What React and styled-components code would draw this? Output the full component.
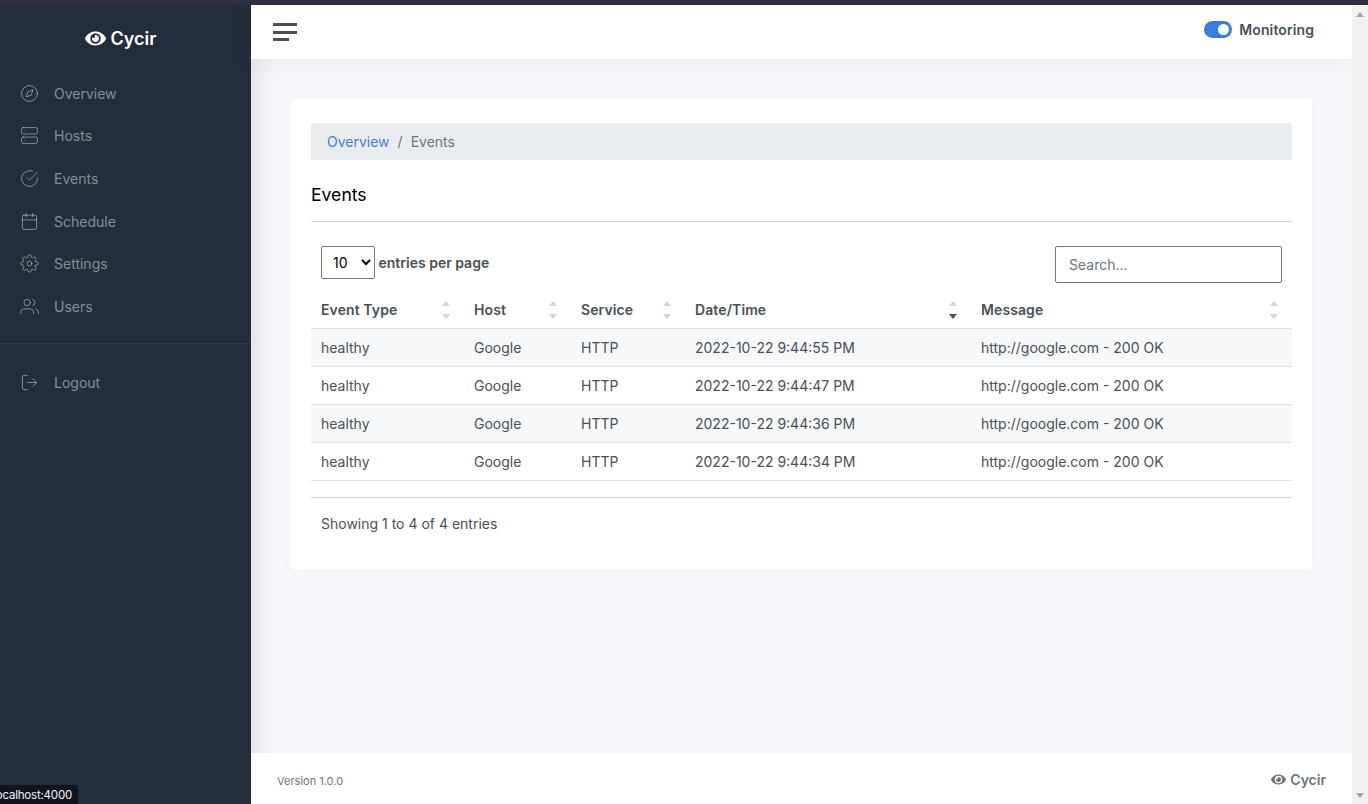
import React from "react";
import styled, { createGlobalStyle } from "styled-components";
import { FiCompass, FiServer, FiCheckCircle, FiCalendar, FiSettings, FiUsers, FiLogOut } from "react-icons/fi";
import { FaEye } from "react-icons/fa";

const navItems = [
  { label: "Overview", icon: FiCompass },
  { label: "Hosts", icon: FiServer },
  { label: "Events", icon: FiCheckCircle },
  { label: "Schedule", icon: FiCalendar },
  { label: "Settings", icon: FiSettings },
  { label: "Users", icon: FiUsers },
];

const columns = [
  { label: "Event Type", width: 153 },
  { label: "Host", width: 107 },
  { label: "Service", width: 114 },
  { label: "Date/Time", width: 286, sorted: true },
  { label: "Message" },
];

const rows = [
  ["healthy", "Google", "HTTP", "2022-10-22 9:44:55 PM", "http://google.com - 200 OK"],
  ["healthy", "Google", "HTTP", "2022-10-22 9:44:47 PM", "http://google.com - 200 OK"],
  ["healthy", "Google", "HTTP", "2022-10-22 9:44:36 PM", "http://google.com - 200 OK"],
  ["healthy", "Google", "HTTP", "2022-10-22 9:44:34 PM", "http://google.com - 200 OK"],
];

const App = () => {
  return (
    <>
      <GlobalStyle />
      <Page>
        <TopStrip />
        <Body>
          <Sidebar>
            <Brand>
              <FaEye size={21} />
              Cycir
            </Brand>
            <NavList>
              {navItems.map(({ label, icon: Icon }) => (
                <NavItem key={label}>
                  <Icon size={19} strokeWidth={1.2} />
                  {label}
                </NavItem>
              ))}
            </NavList>
            <NavDivider />
            <NavItem>
              <FiLogOut size={19} strokeWidth={1.2} />
              Logout
            </NavItem>
          </Sidebar>

          <Main>
            <Header>
              <MenuButton>
                <MenuBar />
                <MenuBar />
                <MenuBar $short />
              </MenuButton>
              <MonitorToggle>
                <Switch />
                Monitoring
              </MonitorToggle>
            </Header>

            <Content>
              <Card>
                <Breadcrumb>
                  <CrumbLink>Overview</CrumbLink>
                  <CrumbSep>/</CrumbSep>
                  <span>Events</span>
                </Breadcrumb>
                <PageTitle>Events</PageTitle>
                <TableTop>
                  <PerPage>
                    <PerPageSelect defaultValue="10">
                      <option>5</option>
                      <option>10</option>
                      <option>15</option>
                    </PerPageSelect>
                    entries per page
                  </PerPage>
                  <SearchInput placeholder="Search..." />
                </TableTop>
                <Table>
                  <thead>
                    <tr>
                      {columns.map((col) => (
                        <HeadCell key={col.label} style={{ width: col.width }}>
                          <HeadInner>
                            {col.label}
                            <SortArrows>
                              <ArrowUp />
                              <ArrowDown $active={col.sorted} />
                            </SortArrows>
                          </HeadInner>
                        </HeadCell>
                      ))}
                    </tr>
                  </thead>
                  <tbody>
                    {rows.map((row, i) => (
                      <Row key={i} $odd={i % 2 === 0}>
                        {row.map((cell, j) => (
                          <Cell key={j}>{cell}</Cell>
                        ))}
                      </Row>
                    ))}
                  </tbody>
                </Table>
                <TableBottom>Showing 1 to 4 of 4 entries</TableBottom>
              </Card>
            </Content>

            <Footer>
              <Version>Version 1.0.0</Version>
              <FooterBrand>
                <FaEye size={15} />
                Cycir
              </FooterBrand>
            </Footer>
          </Main>

          <Scrollbar>
            <ScrollUp />
            <ScrollDown />
          </Scrollbar>
        </Body>
        <StatusTip>localhost:4000</StatusTip>
      </Page>
    </>
  );
};

export default App;

const GlobalStyle = createGlobalStyle`
  html, body {
    margin: 0;
    padding: 0;
    height: 100%;
    overflow: hidden;
  }
  body {
    font-family: Inter, "Liberation Sans", sans-serif;
    font-size: 14px;
    color: #495057;
  }
  * {
    box-sizing: border-box;
  }
`;

const Page = styled.div`
  position: relative;
  display: flex;
  flex-direction: column;
  height: 100vh;
`;

const TopStrip = styled.div`
  flex: 0 0 5px;
  background: #2f3142;
`;

const Body = styled.div`
  flex: 1;
  display: flex;
  min-height: 0;
`;

const Sidebar = styled.nav`
  flex: 0 0 251px;
  background: #222e3c;
`;

const Brand = styled.div`
  display: flex;
  align-items: center;
  justify-content: center;
  gap: 5px;
  height: 66.7px;
  padding-right: 10px;
  color: #fff;
  font-size: 18px;
  font-weight: 600;
`;

const NavList = styled.div`
  display: flex;
  flex-direction: column;
`;

const NavItem = styled.a`
  display: flex;
  align-items: center;
  gap: 15px;
  height: 42.7px;
  padding-left: 20px;
  color: rgba(233, 236, 239, 0.5);
  font-size: 14px;

  svg {
    flex: none;
  }
`;

const NavDivider = styled.div`
  height: 1px;
  margin: 15px 0 17px;
  background: #2d3a49;
`;

const Main = styled.div`
  flex: 1;
  display: flex;
  flex-direction: column;
  min-width: 0;
  background: #f7f7fc;
  box-shadow: inset 28px 0 22px -20px rgba(34, 46, 60, 0.1);
`;

const Header = styled.header`
  flex: 0 0 54px;
  display: flex;
  align-items: center;
  justify-content: space-between;
  padding: 0 38px 0 22px;
  background: #fff;
  box-shadow: 0 0 28px rgba(34, 46, 60, 0.08);
`;

const MenuButton = styled.div`
  display: flex;
  flex-direction: column;
  gap: 4.5px;
  width: 24px;
`;

const MenuBar = styled.span`
  display: block;
  height: 3px;
  width: ${(p) => (p.$short ? "16px" : "24px")};
  background: #495057;
`;

const MonitorToggle = styled.div`
  display: flex;
  align-items: center;
  gap: 7px;
  padding-bottom: 5px;
  font-size: 14px;
  font-weight: 600;
  letter-spacing: 0.1px;
`;

const Switch = styled.span`
  position: relative;
  display: block;
  width: 28px;
  height: 17px;
  border-radius: 9px;
  background: #3b7ddd;

  &::after {
    content: "";
    position: absolute;
    top: 3px;
    right: 3px;
    width: 11px;
    height: 11px;
    border-radius: 50%;
    background: #fff;
  }
`;

const Content = styled.main`
  flex: 1;
  padding: 40px 40px 0;
`;

const Card = styled.section`
  height: 471px;
  padding: 24px 20px;
  background: #fff;
  border-radius: 4px;
  box-shadow: 0 0 14px rgba(34, 46, 60, 0.03);
`;

const Breadcrumb = styled.div`
  display: flex;
  align-items: center;
  gap: 8px;
  height: 37px;
  padding: 0 16px;
  border-radius: 3px;
  background: #e9ecef;
  color: #6c757d;
`;

const CrumbLink = styled.a`
  color: #4a7fd8;
`;

const CrumbSep = styled.span`
  color: #6c757d;
`;

const PageTitle = styled.h2`
  margin: 0 0 24px;
  padding: 24px 0 16px;
  border-bottom: 1px solid #ced4da;
  color: #000;
  font-size: 17.6px;
  font-weight: 400;
  line-height: 21px;
`;

const TableTop = styled.div`
  display: flex;
  justify-content: space-between;
  padding: 0 10px;
  margin-bottom: 8px;
`;

const PerPage = styled.label`
  display: flex;
  align-items: center;
  gap: 3.5px;
  height: 33px;
  font-weight: 600;
`;

const PerPageSelect = styled.select`
  width: 54px;
  height: 33px;
  padding-left: 7px;
  border: 1px solid #767676;
  border-radius: 2px;
  background: #fff;
  color: #000;
  font-family: Inter, sans-serif;
  font-size: 14px;
`;

const SearchInput = styled.input`
  width: 227px;
  height: 37px;
  padding: 0 13px;
  border: 1px solid #767676;
  border-radius: 2px;
  font-family: Inter, sans-serif;
  font-size: 14px;

  &::placeholder {
    color: #6c757d;
  }
`;

const Table = styled.table`
  width: 100%;
  table-layout: fixed;
  border-collapse: collapse;
`;

const HeadCell = styled.th`
  height: 37px;
  padding: 0 10px;
  border-bottom: 1px solid #dee2e6;
  text-align: left;
  font-weight: 600;
  letter-spacing: 0.1px;
`;

const HeadInner = styled.div`
  display: flex;
  align-items: center;
  justify-content: space-between;
`;

const SortArrows = styled.span`
  display: flex;
  flex-direction: column;
  gap: 8px;
  margin: 2px 4px 0 0;
`;

const ArrowUp = styled.i`
  width: 0;
  height: 0;
  border-left: 4px solid transparent;
  border-right: 4px solid transparent;
  border-bottom: 5px solid #d4d4d4;
`;

const ArrowDown = styled.i`
  width: 0;
  height: 0;
  border-left: 4px solid transparent;
  border-right: 4px solid transparent;
  border-top: 5px solid ${(p) => (p.$active ? "#495057" : "#d4d4d4")};
`;

const Row = styled.tr`
  background: ${(p) => (p.$odd ? "#f7f8f9" : "#fff")};
`;

const Cell = styled.td`
  height: 38px;
  padding: 0 10px;
  border-bottom: 1px solid #dee2e6;
`;

const TableBottom = styled.div`
  margin-top: 16px;
  padding: 17px 10px 0;
  border-top: 1px solid #ced4da;
  line-height: 17px;
`;

const Footer = styled.footer`
  flex: 0 0 51px;
  display: flex;
  align-items: center;
  justify-content: space-between;
  padding: 2px 26px 0;
  background: #fff;
`;

const Version = styled.span`
  padding-top: 3px;
  color: #6c757d;
  font-size: 11px;
`;

const FooterBrand = styled.span`
  display: flex;
  align-items: center;
  gap: 4px;
  color: #6c757d;
  font-size: 14px;
  font-weight: 600;
`;

const Scrollbar = styled.div`
  flex: 0 0 16px;
  display: flex;
  flex-direction: column;
  justify-content: space-between;
  align-items: center;
  padding: 7px 0 6px;
  background: #f1f1f1;
`;

const ScrollUp = styled.i`
  width: 0;
  height: 0;
  border-left: 4px solid transparent;
  border-right: 4px solid transparent;
  border-bottom: 5px solid #a3a3a3;
`;

const ScrollDown = styled.i`
  width: 0;
  height: 0;
  border-left: 4px solid transparent;
  border-right: 4px solid transparent;
  border-top: 5px solid #a3a3a3;
`;

const StatusTip = styled.div`
  position: absolute;
  left: 0;
  bottom: 0;
  width: 78px;
  height: 19px;
  padding-right: 6px;
  overflow: hidden;
  direction: rtl;
  border-top-right-radius: 3px;
  background: #10151b;
  color: #f2f2f2;
  font-size: 11.5px;
  letter-spacing: -0.2px;
  line-height: 20px;
  white-space: nowrap;
`;
